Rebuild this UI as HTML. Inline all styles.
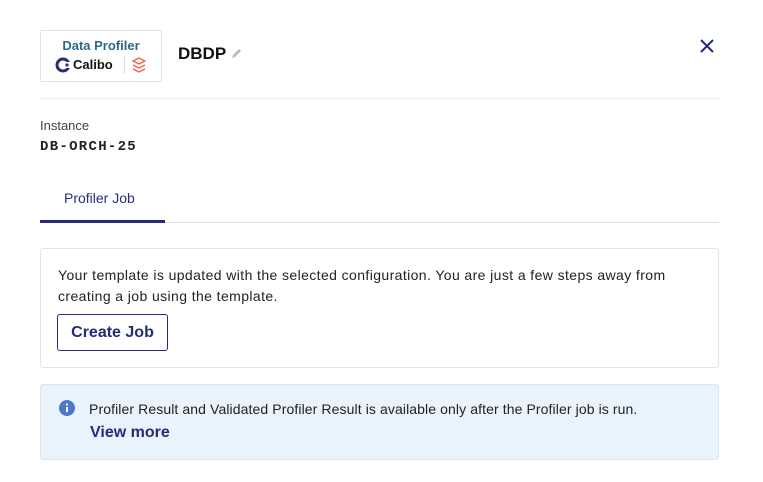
<!DOCTYPE html>
<html><head><style>
body{margin:0;width:763px;height:482px;background:#fff;font-family:"Liberation Sans",sans-serif;position:relative;overflow:hidden}
.a{position:absolute}
</style></head><body>
<div class="a" style="left:40px;top:30px;width:120px;height:50px;border:1px solid #e3e3e3;"></div>
<div class="a" style="left:40px;top:38px;width:122px;text-align:center;font-size:13px;font-weight:bold;color:#2f6a82">Data Profiler</div>
<svg class="a" style="left:55px;top:57px" width="16" height="16"><circle cx="8" cy="8" r="6" fill="none" stroke="#2b2f7a" stroke-width="3"/><rect x="9" y="5" width="7" height="6" fill="#fff"/><circle cx="12" cy="8" r="1.6" fill="#2b2f7a"/></svg>
<div class="a" style="left:73px;top:57px;font-size:13px;font-weight:bold;color:#111">Calibo</div>
<div class="a" style="left:124px;top:56px;width:1px;height:18px;background:#ddd"></div>
<svg class="a" style="left:131px;top:56px" width="16" height="18"><path d="M2 5l6-3 6 3-6 3zM2 9l6 3 6-3M2 13l6 3 6-3" fill="none" stroke="#f0624d" stroke-width="1.3"/></svg>
<div class="a" style="left:178px;top:44px;font-size:17px;font-weight:bold;color:#111">DBDP</div>
<svg class="a" style="left:230px;top:47px" width="13" height="13"><path d="M2 11l1-3 6-6 2 2-6 6z" fill="#bbb"/></svg>
<svg class="a" style="left:699px;top:38px" width="16" height="16"><path d="M2 2l12 12M14 2L2 14" stroke="#262a7a" stroke-width="2"/></svg>
<div class="a" style="left:40px;top:98px;width:679px;height:1px;background:#ececec"></div>
<div class="a" style="left:40px;top:118px;font-size:13px;color:#444">Instance</div>
<div class="a" style="left:40px;top:139px;font-size:14px;font-weight:bold;color:#222;font-family:'Liberation Mono',monospace;letter-spacing:1.3px">DB-ORCH-25</div>
<div class="a" style="left:64px;top:190px;font-size:14px;color:#2a2e7e">Profiler Job</div>
<div class="a" style="left:40px;top:222px;width:679px;height:1px;background:#e0e0e0"></div>
<div class="a" style="left:40px;top:220px;width:125px;height:3px;background:#262a7a"></div>
<div class="a" style="left:40px;top:248px;width:677px;height:118px;border:1px solid #e3e3e3;border-radius:3px"></div>
<div class="a" style="left:58px;top:265px;font-size:14px;color:#222;line-height:21px;width:640px;letter-spacing:0.4px">Your template is updated with the selected configuration. You are just a few steps away from<br>creating a job using the template.</div>
<div class="a" style="left:57px;top:314px;width:109px;height:35px;border:1px solid #262a7a;border-radius:3px;font-size:16px;font-weight:bold;color:#262a7a;text-align:center;line-height:35px">Create Job</div>
<div class="a" style="left:40px;top:384px;width:677px;height:74px;border:1px solid #dbe6ef;border-radius:3px;background:#e8f3fb"></div>
<svg class="a" style="left:59px;top:400px" width="16" height="16"><circle cx="8" cy="8" r="8" fill="#4f77c7"/><rect x="7" y="7" width="2" height="5" fill="#fff"/><circle cx="8" cy="4.5" r="1.1" fill="#fff"/></svg>
<div class="a" style="left:89px;top:401px;font-size:14px;color:#222;letter-spacing:0.1px">Profiler Result and Validated Profiler Result is available only after the Profiler job is run.</div>
<div class="a" style="left:90px;top:424px;font-size:16px;font-weight:bold;color:#262a7a">View more</div>
</body></html>
